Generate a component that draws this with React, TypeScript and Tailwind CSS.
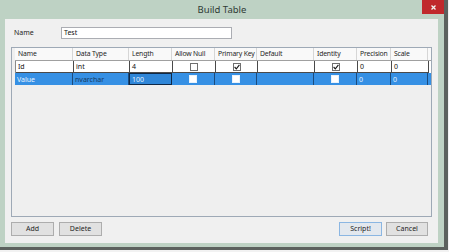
import React from "react";

type Col = { label: string; w: string };

const cols: Col[] = [
  { label: "Name", w: "w-[58px]" },
  { label: "Data Type", w: "w-[56px]" },
  { label: "Length", w: "w-[43px]" },
  { label: "Allow Null", w: "w-[43px]" },
  { label: "Primary Key", w: "w-[42px]" },
  { label: "Default", w: "w-[57px]" },
  { label: "Identity", w: "w-[43px]" },
  { label: "Precision", w: "w-[34px]" },
  { label: "Scale", w: "w-[37px]" },
];

function Check({ checked, white }: { checked?: boolean; white?: boolean }) {
  return (
    <div
      className={
        white
          ? "w-[8px] h-[8px] bg-white border border-[#e8f2fc]"
          : "w-[8px] h-[8px] bg-white border border-[#6f6f6f] flex items-center justify-center"
      }
    >
      {checked && (
        <svg width="6" height="6" viewBox="0 0 6 6">
          <path d="M0.6 3 L2.3 4.8 L5.4 0.8" fill="none" stroke="#1a1a1a" strokeWidth="1.1" />
        </svg>
      )}
    </div>
  );
}

type CellVal = { text?: string; check?: boolean; checked?: boolean };

const row1: CellVal[] = [
  { text: "Id" },
  { text: "int" },
  { text: "4" },
  { check: true, checked: false },
  { check: true, checked: true },
  { text: "" },
  { check: true, checked: true },
  { text: "0" },
  { text: "0" },
];

const row2: CellVal[] = [
  { text: "Value" },
  { text: "nvarchar" },
  { text: "100" },
  { check: true },
  { check: true },
  { text: "" },
  { check: true },
  { text: "0" },
  { text: "0" },
];

export default function App() {
  return (
    <div className="w-[449px] h-[252px] bg-[#f2f2f2] font-['Noto_Sans',sans-serif] overflow-hidden">
      <div className="w-[448px] h-[250px] bg-[#5c615e] pr-[4px] pb-[3px]">
        <div className="w-[444px] h-[247px] bg-[#bed2c4] flex flex-col">
          {/* title bar */}
          <div className="h-[19px] flex items-start shrink-0">
            <div className="w-[22px]" />
            <div className="flex-1 text-center text-[9.5px] leading-[19px] text-[#2e3b34]">Build Table</div>
            <div className="w-[22px] h-[14px] bg-red-700 opacity-80 flex items-center justify-center">
              <svg width="5" height="5" viewBox="0 0 5 5">
                <path d="M0.5 0.5 L4.5 4.5 M4.5 0.5 L0.5 4.5" stroke="#ffffff" strokeWidth="1.3" />
              </svg>
            </div>
          </div>

          {/* client area */}
          <div className="ml-[5px] mr-[6px] h-[224px] bg-[#f0f0f0] px-[6px] flex flex-col shrink-0">
            {/* name row */}
            <div className="mt-[8px] h-[12px] flex items-center">
              <div className="w-[50px] pl-[3px] text-[7px] leading-[12px] text-[#1e1e1e]">Name</div>
              <div className="w-[171px] h-[12px] bg-white border border-[#abadb3] px-[2px] text-[7px] leading-[9px] text-[#111]">
                Test
              </div>
            </div>

            {/* grid */}
            <div className="mt-[8px] h-[170px] border border-[#9ea9b6] pl-[3px] bg-[#efefef] flex flex-col">
              {/* header */}
              <div className="flex h-[13px] bg-[#f9f9f9] border-b border-[#a0a0a0]">
                {cols.map((c) => (
                  <div
                    key={c.label}
                    className={`${c.w} shrink-0 border-r border-[#d6d6d6] pl-[3px] text-[6.8px] tracking-[-0.15px] leading-[12px] text-[#1e1e1e] whitespace-nowrap overflow-hidden`}
                  >
                    {c.label}
                  </div>
                ))}
              </div>
              {/* row 1 */}
              <div className="flex h-[12px] bg-white border-l border-[#8a8a8a]">
                {cols.map((c, i) => {
                  const v = row1[i];
                  return (
                    <div
                      key={c.label}
                      className={`${c.w} shrink-0 border-r border-b border-[#4a4a4a] flex items-center ${
                        v.check ? "justify-center" : "pl-[2px]"
                      } text-[7px] leading-[11px] text-[#111] whitespace-nowrap`}
                    >
                      {v.check ? <Check checked={v.checked} /> : v.text}
                    </div>
                  );
                })}
              </div>
              {/* row 2 (selected) */}
              <div className="flex h-[12px] bg-[#3690e4]">
                {cols.map((c, i) => {
                  const v = row2[i];
                  const focused = i === 2;
                  const dark = i === 1;
                  return (
                    <div
                      key={c.label}
                      className={`${c.w} shrink-0 flex items-center ${
                        focused ? "border border-[#0f2846] bg-[#2f86d8]" : "border-r border-[#1c4b7c]"
                      } ${v.check ? "justify-center" : "pl-[2px]"} text-[7px] leading-[11px] whitespace-nowrap ${
                        dark ? "text-[#173a62]" : "text-[#e9f4ff]"
                      }`}
                    >
                      {v.check ? <Check white /> : v.text}
                    </div>
                  );
                })}
              </div>
            </div>

            {/* buttons */}
            <div className="mt-[5px] h-[14px] flex">
              <button className="w-[43px] h-[14px] bg-[#e1e1e1] border border-[#adadad] text-[7px] leading-[12px] text-[#1e1e1e]">
                Add
              </button>
              <button className="ml-[5px] w-[43px] h-[14px] bg-[#e1e1e1] border border-[#adadad] text-[7px] leading-[12px] text-[#1e1e1e]">
                Delete
              </button>
              <div className="flex-1" />
              <button className="w-[43px] h-[14px] bg-[#e3e8ee] border border-[#8bb6e2] text-[7px] leading-[12px] text-[#1e1e1e]">
                Script!
              </button>
              <button className="ml-[4px] mr-[4px] w-[42px] h-[14px] bg-[#e1e1e1] border border-[#adadad] text-[7px] leading-[12px] text-[#1e1e1e]">
                Cancel
              </button>
            </div>
          </div>
        </div>
      </div>
    </div>
  );
}
